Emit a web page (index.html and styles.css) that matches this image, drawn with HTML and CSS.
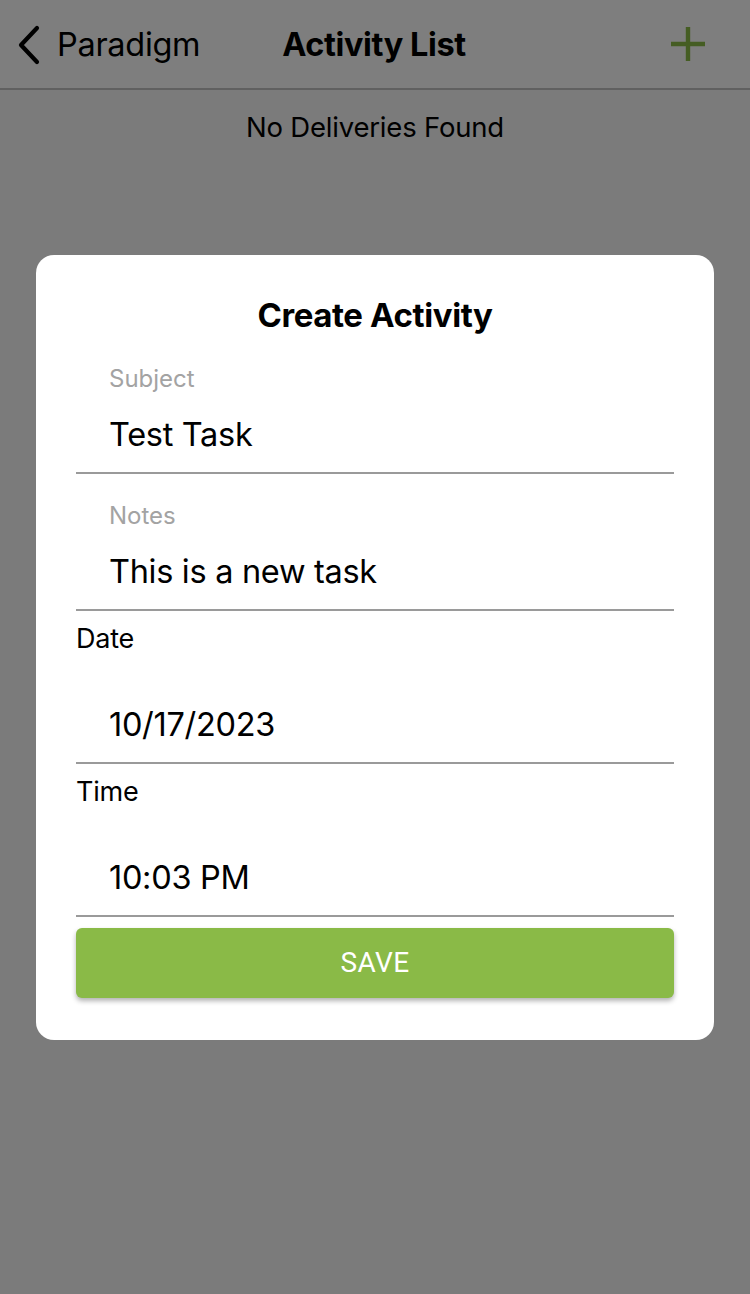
FILE: index.html
```html
<!DOCTYPE html>
<html>
<head>
<meta charset="utf-8">
<link rel="stylesheet" href="styles.css">
</head>
<body>
<div class="screen">
  <header class="navbar">
    <div class="nav-left">
      <svg class="chevron" width="26" height="40" viewBox="0 0 26 40"><path d="M21 3 L5 20 L21 37" fill="none" stroke="#000" stroke-width="4.2" stroke-linecap="round" stroke-linejoin="round"/></svg>
      <span class="back-text">Paradigm</span>
    </div>
    <div class="nav-title">Activity List</div>
    <div class="nav-right">
      <svg width="36" height="36" viewBox="0 0 36 36"><path d="M18 1 V35 M1 18 H35" stroke="#8aba47" stroke-width="4.4" stroke-linecap="butt"/></svg>
    </div>
  </header>
  <div class="empty">No Deliveries Found</div>
</div>
<div class="overlay">
  <div class="modal">
    <h2 class="modal-title">Create Activity</h2>
    <div class="field floating">
      <div class="flabel">Subject</div>
      <div class="fvalue">Test Task</div>
    </div>
    <div class="field floating">
      <div class="flabel">Notes</div>
      <div class="fvalue">This is a new task</div>
    </div>
    <div class="field picker">
      <div class="plabel">Date</div>
      <div class="fvalue">10/17/2023</div>
    </div>
    <div class="field picker">
      <div class="plabel">Time</div>
      <div class="fvalue">10:03 PM</div>
    </div>
    <button class="save">SAVE</button>
  </div>
</div>
</body>
</html>
```
FILE: styles.css
```css
html, body {
  margin: 0;
  padding: 0;
}
body {
  width: 750px;
  height: 1294px;
  background: #f6f6f6;
  font-family: Inter, Roboto, "Liberation Sans", sans-serif;
  color: #000;
  overflow: hidden;
}
.screen {
  height: 1294px;
}
.navbar {
  height: 88px;
  border-bottom: 2px solid #c0c0c0;
  background: #fdfdfd;
  display: grid;
  grid-template-columns: 1fr auto 1fr;
  align-items: center;
  padding: 0 44px 0 16px;
  box-sizing: content-box;
}
.nav-left {
  display: flex;
  align-items: center;
  gap: 15px;
}
.chevron {
  display: block;
  margin-top: 1px;
}
.back-text {
  font-size: 32.5px;
  letter-spacing: -0.3px;
}
.nav-title {
  font-size: 32.5px;
  font-weight: 700;
  letter-spacing: -0.4px;
  margin-left: 26px;
}
.nav-right {
  display: flex;
  justify-content: flex-end;
}
.nav-right svg {
  display: block;
}
.empty {
  text-align: center;
  font-size: 27.5px;
  padding-top: 20px;
  letter-spacing: -0.2px;
}
.overlay {
  position: fixed;
  inset: 0;
  background: rgba(0, 0, 0, 0.5);
  display: flex;
  align-items: center;
  justify-content: center;
}
.modal {
  width: 678px;
  box-sizing: border-box;
  background: #fff;
  border-radius: 18px;
  padding: 38px 40px 42px;
}
.modal-title {
  margin: 0;
  text-align: center;
  font-size: 33px;
  font-weight: 700;
  letter-spacing: -0.4px;
  line-height: 44px;
}
.field {
  border-bottom: 2px solid #9a9a9a;
  box-sizing: border-box;
}
.floating {
  padding: 0 0 0 33px;
  height: 137px;
}
.flabel {
  font-size: 24px;
  color: #a3a3a3;
  line-height: 30px;
  padding-top: 27px;
}
.floating .fvalue {
  margin-top: 21px;
}
.fvalue {
  font-size: 32.5px;
  line-height: 40px;
  letter-spacing: -0.3px;
}
.picker {
  height: 153px;
}
.plabel {
  font-size: 27px;
  line-height: 32px;
  padding-top: 12px;
  letter-spacing: -0.2px;
}
.picker .fvalue {
  padding-left: 33px;
  margin-top: 50px;
}
.save {
  display: block;
  width: 100%;
  height: 70px;
  margin-top: 11px;
  border: none;
  border-radius: 6px;
  background: #8aba47;
  color: #fff;
  font-family: Roboto, Inter, "Liberation Sans", sans-serif;
  font-size: 28px;
  font-weight: 400;
  letter-spacing: 0.4px;
  box-shadow: 0 3px 5px rgba(0, 0, 0, 0.3);
}
```
